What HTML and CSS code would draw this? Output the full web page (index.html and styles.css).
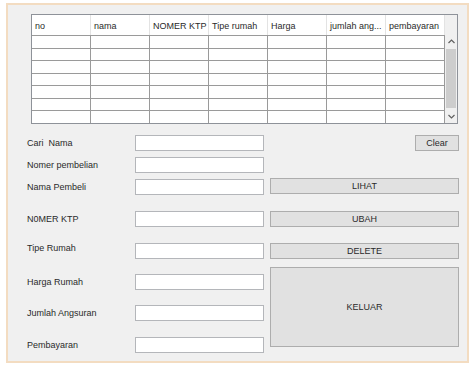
FILE: index.html
```html
<!DOCTYPE html>
<html lang="id">
<head>
    <meta charset="UTF-8">
    <title>Data Pembelian Rumah</title>
    <link rel="stylesheet" href="styles.css">
</head>
<body>
    <div class="window">
        <!-- Tabel data -->
        <div class="table-box">
            <div class="table-main">
                <div class="thead">
                    <div class="th">no</div>
                    <div class="th">nama</div>
                    <div class="th">NOMER KTP</div>
                    <div class="th">Tipe rumah</div>
                    <div class="th">Harga</div>
                    <div class="th">jumlah ang...</div>
                    <div class="th">pembayaran</div>
                </div>
                <div class="tbody" id="tbody"></div>
            </div>
            <div class="table-side">
                <div class="corner"></div>
                <div class="scrollbar">
                    <svg class="arrow" width="7" height="13" viewBox="0 0 7 13">
                        <path d="M0.5 8 L3.5 5 L6.5 8" fill="none" stroke="#606060" stroke-width="1.2"/>
                    </svg>
                    <div class="thumb"></div>
                    <svg class="arrow" width="7" height="13" viewBox="0 0 7 13">
                        <path d="M0.5 5 L3.5 8 L6.5 5" fill="none" stroke="#606060" stroke-width="1.2"/>
                    </svg>
                </div>
            </div>
        </div>

        <!-- Form input -->
        <div class="form">
            <div class="fields">
                <div class="row"><label>Cari&nbsp; Nama</label><input type="text"></div>
                <div class="row gap-s"><label>Nomer pembelian</label><input type="text"></div>
                <div class="row gap-s"><label>Nama Pembeli</label><input type="text"></div>
                <div class="row gap-l"><label>N0MER KTP</label><input type="text"></div>
                <div class="row gap-l up"><label>Tipe Rumah</label><input type="text"></div>
                <div class="row gap-m"><label>Harga Rumah</label><input type="text"></div>
                <div class="row gap-m"><label>Jumlah Angsuran</label><input type="text"></div>
                <div class="row gap-l"><label>Pembayaran</label><input type="text"></div>
            </div>
            <div class="buttons">
                <button class="btn btn-clear">Clear</button>
                <button class="btn btn-lihat">LIHAT</button>
                <button class="btn btn-ubah">UBAH</button>
                <button class="btn btn-delete">DELETE</button>
                <button class="btn btn-keluar">KELUAR</button>
            </div>
        </div>
    </div>

    <script>
        // baris kosong tabel
        const tbody = document.getElementById('tbody');
        let html = '';
        for (let i = 0; i < 7; i++) {
            html += '<div class="tr">';
            for (let j = 0; j < 7; j++) {
                html += '<div class="td"></div>';
            }
            html += '</div>';
        }
        tbody.innerHTML = html;
    </script>
</body>
</html>
```

FILE: styles.css
```css
/* Reset */
* {
    box-sizing: border-box;
    margin: 0;
    padding: 0;
}

body {
    background-color: #ffffff;
    font-family: 'Liberation Sans', Arial, sans-serif;
    font-size: 9px;
    color: #2a2a2a;
}

.window {
    margin: 3px 0 0 6px;
    width: 463px;
    height: 360px;
    background-color: #f0f0f0;
    border: 2px solid #f3dcc1;
    padding: 9px 0 0 23px;
}

/* Tabel */
.table-box {
    display: flex;
    width: 427px;
    height: 110px;
    border: 1px solid #8e9299;
    background-color: #f0f0f0;
}

.table-main {
    width: 413px;
    display: flex;
    flex-direction: column;
}

.thead {
    display: grid;
    grid-template-columns: repeat(7, 1fr);
    height: 20px;
    background-color: #ffffff;
}

.th {
    padding: 6px 0 0 3px;
    border-right: 1px solid #e3e3e3;
    white-space: nowrap;
    overflow: hidden;
}

.tbody {
    flex: 1;
    display: grid;
    grid-template-rows: repeat(7, 1fr);
    background-color: #ffffff;
}

.tr {
    display: grid;
    grid-template-columns: repeat(7, 1fr);
    border-top: 1px solid #9a9a9a;
}

.td {
    border-right: 1px solid #9a9a9a;
}

.table-side {
    flex: 1;
    display: flex;
    flex-direction: column;
}

.corner {
    height: 20px;
}

.scrollbar {
    flex: 1;
    display: flex;
    flex-direction: column;
    align-items: center;
    padding: 0 1px;
}

.arrow {
    flex: none;
}

.thumb {
    flex: 1;
    width: 100%;
    background-color: #cdcdcd;
    margin: 1px 0 2px;
}

/* Form */
.form {
    display: flex;
    margin-top: 11px;
}

.fields {
    display: flex;
    flex-direction: column;
    margin-left: -4px;
}

.row {
    display: flex;
    align-items: center;
    height: 16px;
}

.row.up label {
    margin-top: -6px;
}

.gap-s { margin-top: 6px; }
.gap-m { margin-top: 15px; }
.gap-l { margin-top: 16px; }

.row label {
    width: 108px;
}

.row input {
    width: 129px;
    height: 16px;
    border: 1px solid #b4b6ba;
    background-color: #ffffff;
}

.buttons {
    display: flex;
    flex-direction: column;
    align-items: flex-end;
    width: 189px;
    margin-left: 6px;
}

.btn {
    font-family: 'Liberation Sans', Arial, sans-serif;
    font-size: 9px;
    color: #2a2a2a;
    background-color: #e1e1e1;
    border: 1px solid #adadad;
    width: 100%;
    height: 16px;
}

.btn-clear {
    width: 44px;
}

.btn-lihat { margin-top: 27px; }
.btn-ubah { margin-top: 17px; }
.btn-delete { margin-top: 16px; }

.btn-keluar {
    margin-top: 8px;
    height: 80px;
}
```
